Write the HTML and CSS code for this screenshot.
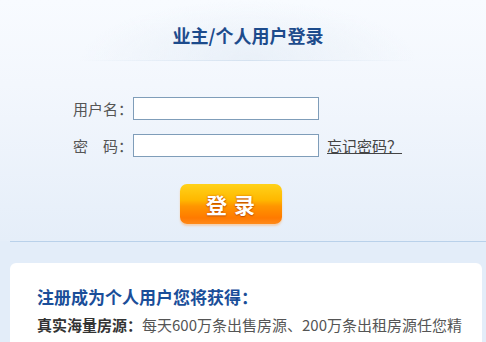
FILE: index.html
```html
<!DOCTYPE html>
<html lang="zh-CN">
<head>
    <meta charset="UTF-8">
    <meta name="viewport" content="width=device-width, initial-scale=1.0">
    <title>业主/个人用户登录</title>
    <link rel="stylesheet" href="styles.css">
</head>
<body>
    <div class="login">
        <div class="login-head">
            <h2>业主/个人用户登录</h2>
        </div>

        <form class="login-form">
            <div class="row">
                <label for="username">用户名：</label>
                <input type="text" id="username">
            </div>
            <div class="row">
                <label for="password">密　码：</label>
                <input type="password" id="password">
                <a href="#" class="forgot">忘记密码？</a>
            </div>
            <button type="button" class="btn-login">登 录</button>
        </form>
    </div>
    <div class="divider"></div>

    <div class="benefits">
        <div class="panel">
            <h3>注册成为个人用户您将获得：</h3>
            <p><strong>真实海量房源：</strong>每天600万条出售房源、200万条出租房源任您精</p>
        </div>
    </div>
</body>
</html>
```

FILE: styles.css
```css
body {
    margin: 0;
    font-family: "Noto Sans CJK SC", "Liberation Sans", sans-serif;
    background-color: #e3edf9;
    color: #555;
    overflow: hidden;
}

.login {
    height: 241px;
    background: linear-gradient(#f8fbff 0%, #f3f7fd 35%, #e5eef9 100%);
}

.login-head {
    height: 60px;
    margin: 0 70px 0 80px;
    background: radial-gradient(ellipse at 50% 100%, #e9f0f8 0%, rgba(233, 240, 248, 0) 70%);
    border-bottom: 1px solid transparent;
    border-image: linear-gradient(90deg, rgba(214, 227, 241, 0), #d5e2f0 50%, rgba(214, 227, 241, 0)) 1;
}

.login-head h2 {
    margin: 0;
    padding-top: 23px;
    font-size: 18px;
    line-height: 24px;
    color: #1d4b8c;
    text-align: center;
}

.login-form {
    padding: 36px 0 0 73px;
}

.row {
    display: flex;
    align-items: center;
    height: 23px;
    margin-bottom: 14px;
}

.row label {
    font-size: 15px;
    width: 60px;
    color: #555;
}

.row input {
    box-sizing: border-box;
    width: 186px;
    height: 23px;
    margin: 0;
    border: 1px solid #7f9db9;
    background: #fff;
    padding: 0 4px;
}

.forgot {
    margin-left: 8px;
    font-size: 15px;
    color: #444;
    text-decoration: underline;
}

.btn-login {
    display: block;
    margin: 27px 0 0 107px;
    width: 102px;
    height: 40px;
    border: none;
    border-radius: 7px;
    background: linear-gradient(#ffd21a 0%, #ffb800 40%, #ff9600 55%, #ff7a00 85%, #ff8a1a 100%);
    box-shadow: 0 2px 2px rgba(255, 170, 90, 0.45);
    color: #fff;
    font-family: inherit;
    font-size: 21px;
    font-weight: bold;
    letter-spacing: 1px;
    text-shadow: 0 0 2px #d05a00, 0 1px 1px #c05000;
    cursor: pointer;
}

.divider {
    margin-left: 10px;
    border-top: 1px solid #b9d1ea;
}

.benefits {
    padding: 21px 4px 0 10px;
}

.panel {
    background: #fff;
    border-radius: 6px 6px 0 0;
    height: 100px;
    padding: 22px 0 0 27px;
}

.panel h3 {
    margin: 0;
    font-size: 17px;
    line-height: 24px;
    color: #1a4e99;
}

.panel p {
    margin: 4px 0 0;
    font-size: 15px;
    line-height: 24px;
    color: #555;
    white-space: nowrap;
}

.panel strong {
    color: #333;
}
```
